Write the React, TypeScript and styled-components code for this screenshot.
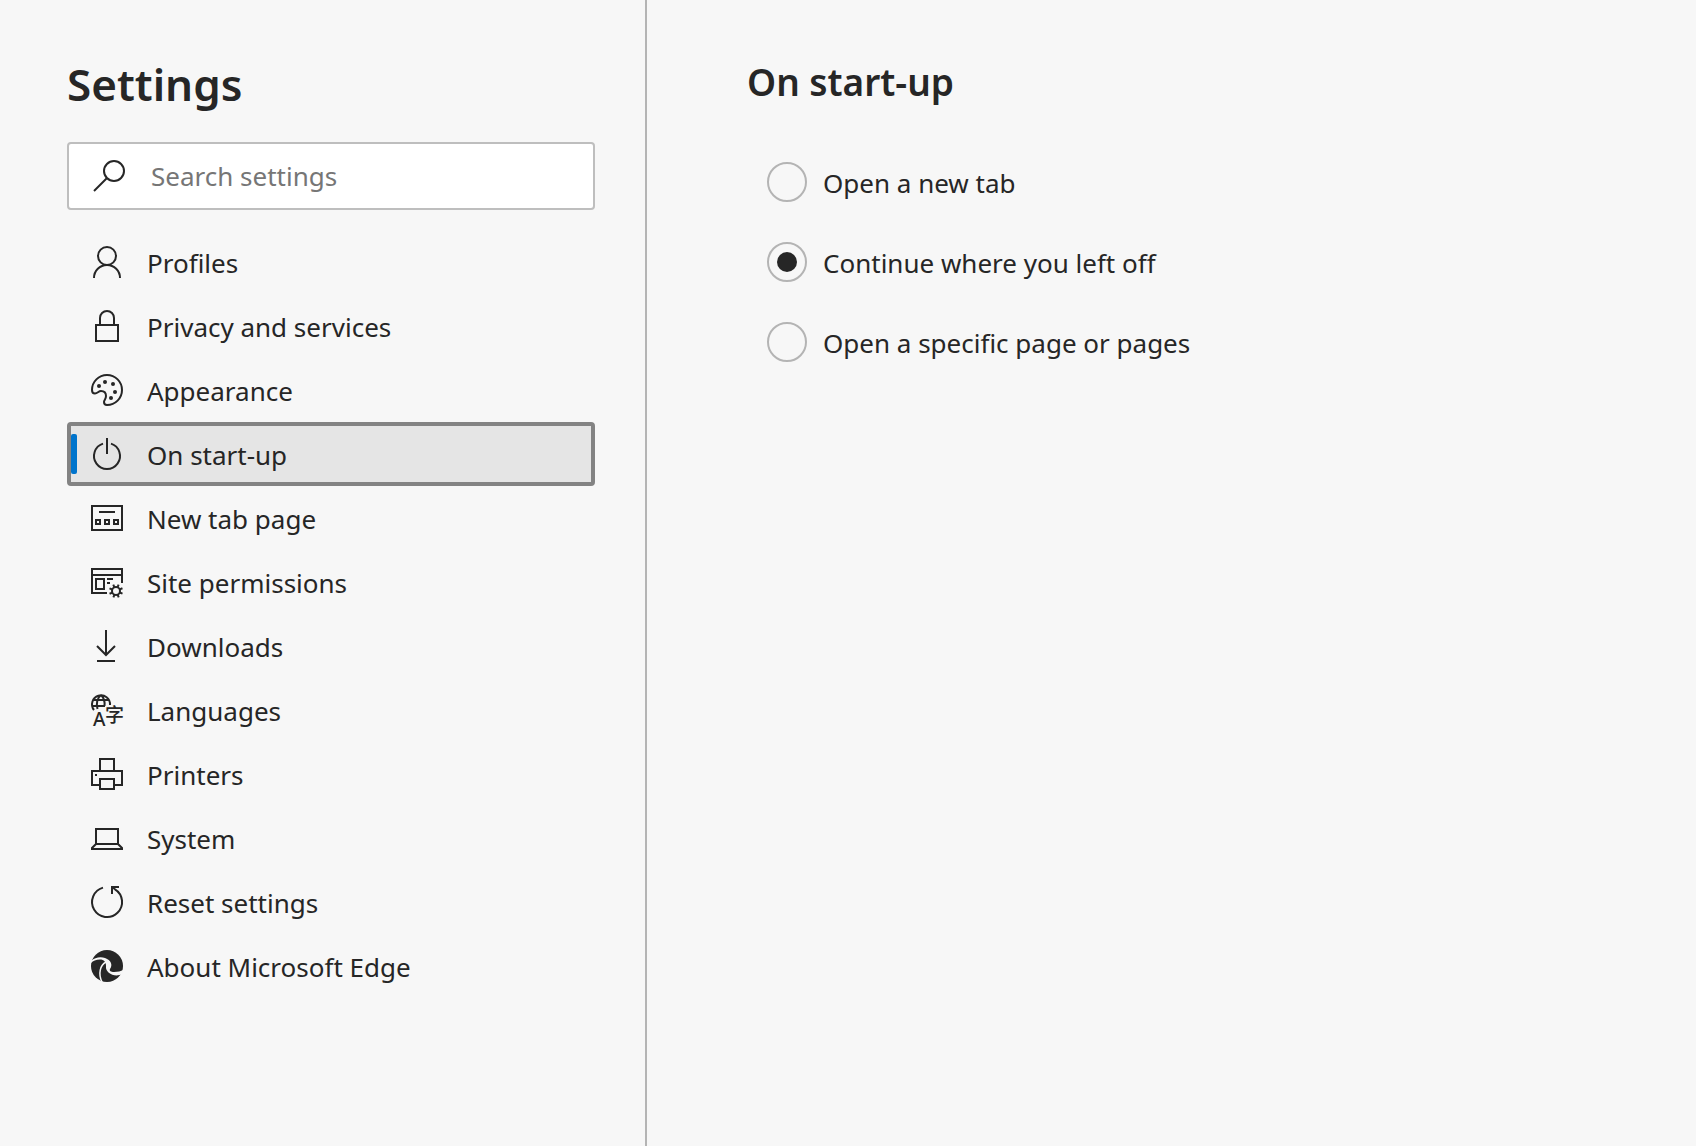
import React, { useState } from "react";
import styled, { createGlobalStyle } from "styled-components";

const GlobalStyle = createGlobalStyle`
  *, *::before, *::after { box-sizing: border-box; }
  body {
    margin: 0;
    background: #f7f7f7;
    color: #262626;
    font-family: "Segoe UI", "Noto Sans", "Open Sans", sans-serif;
    font-size: 26px;
    line-height: 36px;
  }
`;

const Page = styled.div`
  display: flex;
  min-height: 100vh;
`;

const Sidebar = styled.aside`
  flex: none;
  width: 38.15vw;
  padding: 52px 50px 48px 67px;
  border-right: 2px solid #b4b4b4;
`;

const Main = styled.main`
  flex: 1;
  min-width: 0;
  padding: 52px 48px 48px 100px;
`;

const Title = styled.h1`
  margin: 0 0 26px;
  font-size: 44px;
  font-weight: 600;
  line-height: 64px;
`;

const SectionTitle = styled.h2`
  margin: 0 0 40px;
  font-size: 37px;
  font-weight: 600;
  line-height: 60px;
`;

const SearchBox = styled.label`
  display: flex;
  align-items: center;
  gap: 26px;
  height: 68px;
  margin-bottom: 20px;
  padding: 0 24px;
  border: 2px solid #bebebe;
  border-radius: 4px;
  background: #fff;
`;

const SearchInput = styled.input`
  flex: 1;
  min-width: 0;
  padding: 0;
  border: 0;
  outline: 0;
  background: transparent;
  color: inherit;
  font: inherit;
  &::placeholder { color: #767676; opacity: 1; }
`;

const NavList = styled.ul`
  margin: 0;
  padding: 0;
  list-style: none;
`;

const NavLink = styled.a<{ $active: boolean }>`
  position: relative;
  display: flex;
  align-items: center;
  gap: 24px;
  height: 64px;
  padding: 0 20px;
  border: 4px solid ${(p) => (p.$active ? "#838383" : "transparent")};
  border-radius: 4px;
  background: ${(p) => (p.$active ? "#e5e5e5" : "transparent")};
  color: inherit;
  text-decoration: none;
  white-space: nowrap;
  &::before {
    content: "";
    display: ${(p) => (p.$active ? "block" : "none")};
    position: absolute;
    left: 0;
    top: 8px;
    width: 6px;
    height: 40px;
    border-radius: 2px;
    background: #0074cc;
  }
`;

const Label = styled.span`
  padding-top: 2px;
`;

const IconSvg = styled.svg`
  flex: none;
  width: 32px;
  height: 32px;
  overflow: visible;
  fill: none;
  stroke: #262626;
  stroke-width: 2;
`;

const IconLetter = styled.text`
  fill: #262626;
  stroke: none;
  font-family: "Noto Sans", "Noto Sans CJK SC", sans-serif;
  font-size: 19px;
  font-weight: 500;
`;

const Options = styled.fieldset`
  display: flex;
  flex-direction: column;
  align-items: flex-start;
  gap: 20px;
  margin: 0;
  padding: 0 20px;
  border: 0;
`;

const Option = styled.label`
  display: flex;
  align-items: center;
  gap: 16px;
  min-height: 60px;
`;

const Radio = styled.input`
  flex: none;
  display: grid;
  place-items: center;
  appearance: none;
  width: 40px;
  height: 40px;
  margin: 0;
  border: 2px solid #b4b4b4;
  border-radius: 50%;
  &:checked::before {
    content: "";
    width: 20px;
    height: 20px;
    border-radius: 50%;
    background: #262626;
  }
`;

function Icon({ children }: { children: React.ReactNode }) {
  return (
    <IconSvg viewBox="0 0 32 32" aria-hidden="true">
      {children}
    </IconSvg>
  );
}

const gearTeeth = [0, 45, 90, 135, 180, 225, 270, 315];

const navItems: { label: string; icon: React.ReactNode }[] = [
  {
    label: "Profiles",
    icon: (
      <>
        <circle cx="16" cy="10" r="9" />
        <path d="M3 32a13 13 0 0 1 26 0" />
      </>
    ),
  },
  {
    label: "Privacy and services",
    icon: (
      <>
        <path d="M5 15h22v16H5z" />
        <path d="M9 15V8a7 7 0 0 1 14 0v7" />
      </>
    ),
  },
  {
    label: "Appearance",
    icon: (
      <>
        <path d="M1 16A15 15 0 0 1 16 1a15 15 0 0 1 0 30c-2 0-3-1.500-3-3 0-2 2-3 2-6 0-3-2-5-5-5-2.500 0-3.500 2.500-6 2.500C2 19.500 1 18 1 16z" />
        <g fill="#262626" stroke="none">
          <circle cx="8" cy="12" r="2" />
          <circle cx="14" cy="8" r="2" />
          <circle cx="22" cy="10" r="2" />
          <circle cx="24" cy="18" r="2" />
          <circle cx="20" cy="24" r="2" />
        </g>
      </>
    ),
  },
  {
    label: "On start-up",
    icon: <path d="M12 5.600A13 13 0 1 0 20 5.600M16 0v16" />,
  },
  {
    label: "New tab page",
    icon: <path d="M1 4h30v24H1zM8 10h16M5 18h4v4H5zM14 18h4v4h-4zM23 18h4v4h-4z" />,
  },
  {
    label: "Site permissions",
    icon: (
      <>
        <path d="M16 27H1V3h30v14M1 9h30M5 13h8v10H5zM16 13h6M16 17h3" />
        <circle cx="25" cy="25" r="4" />
        {gearTeeth.map((angle) => (
          <path key={angle} d="M25 21v-3" transform={`rotate(${angle + 22} 25 25)`} />
        ))}
      </>
    ),
  },
  {
    label: "Downloads",
    icon: <path d="M15 0v25M6 16l9 9 9-9M6 31h18" />,
  },
  {
    label: "Languages",
    icon: (
      <>
        <path d="M3 16A9 9 0 1 1 19 11M2 6h16M1 12h13M6.500 15C5 10 6 4 10 1M10 1c3 3 4 7 3.500 11" />
        <IconLetter x="2" y="32">A</IconLetter>
        <IconLetter x="14" y="28">字</IconLetter>
      </>
    ),
  },
  {
    label: "Printers",
    icon: (
      <>
        <path d="M9 13V1h14v12M8 27H1V13h30v14h-7M9 21h14v10H9z" />
        <path d="M4 17h2" />
      </>
    ),
  },
  {
    label: "System",
    icon: <path d="M5 22V7h22v15zl-4 4v1h30v-1l-4-4" />,
  },
  {
    label: "Reset settings",
    icon: <path d="M12 1.600A15 15 0 1 0 24 3.300L21 1M28 1h-7v7" />,
  },
  {
    label: "About Microsoft Edge",
    icon: (
      <>
        <circle cx="16" cy="16" r="16" fill="#262626" stroke="none" />
        <path
          d="M0 11C4 7 10 6.500 14 8C20 10 22 15 19 19C18 21 20 22 23 22C27 22 30 21 32 20L31 24C24 28 14 23 15 16C15 12 13 9.500 9 9.500C5 9.500 2 11 0 13z"
          fill="#f7f7f7"
          stroke="none"
        />
        <path d="M11 32C7 24 9 15 15 12" stroke="#f7f7f7" strokeWidth="1.500" />
      </>
    ),
  },
];

const startupOptions = ["Open a new tab", "Continue where you left off", "Open a specific page or pages"];

export default function App() {
  const [selected, setSelected] = useState(startupOptions[1]);

  return (
    <>
      <GlobalStyle />
      <Page>
        <Sidebar>
          <Title>Settings</Title>
          <SearchBox>
            <Icon>
              <circle cx="21" cy="11" r="10" />
              <path d="M14 18L1 31" />
            </Icon>
            <SearchInput type="search" placeholder="Search settings" aria-label="Search settings" />
          </SearchBox>
          <nav aria-label="Settings">
            <NavList>
              {navItems.map(({ label, icon }) => (
                <li key={label}>
                  <NavLink
                    href="#"
                    $active={label === "On start-up"}
                    aria-current={label === "On start-up" ? "page" : undefined}
                  >
                    <Icon>{icon}</Icon>
                    <Label>{label}</Label>
                  </NavLink>
                </li>
              ))}
            </NavList>
          </nav>
        </Sidebar>
        <Main>
          <SectionTitle id="startup-title">On start-up</SectionTitle>
          <Options aria-labelledby="startup-title">
            {startupOptions.map((option) => (
              <Option key={option}>
                <Radio
                  type="radio"
                  name="startup"
                  checked={selected === option}
                  onChange={() => setSelected(option)}
                />
                <Label>{option}</Label>
              </Option>
            ))}
          </Options>
        </Main>
      </Page>
    </>
  );
}
